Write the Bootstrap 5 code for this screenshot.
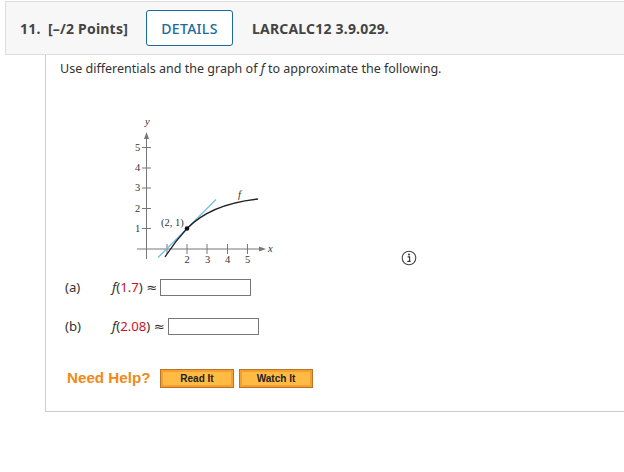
<!DOCTYPE html>
<html lang="en">
<head>
  <meta charset="UTF-8" />
  <title>Question 11</title>
  <meta name="viewport" content="width=device-width, initial-scale=1" />
  <link href="https://cdn.jsdelivr.net/npm/bootstrap@5.3.0/dist/css/bootstrap.min.css" rel="stylesheet" />
  <style>
    body { font-family: "Noto Sans", "DejaVu Sans", sans-serif; font-size: 12.53px; color: #333; background: #fff; overflow: hidden; }
    .q-head { margin: 1px 0 0 5px; height: 54px; background: #f7f7f7; border: 1px solid #ddd; border-right: 0; padding-left: 14px; font-weight: 700; font-size: 14px; letter-spacing: .2px; color: #444; }
    .q-num { width: 28px; }
    .q-points { width: 98px; }
    .q-details { width: 87px; height: 36px; border: 1px solid #1a6a9c; border-radius: 3px; color: #1a6a9c; background: #fff; font-weight: 500; font-size: 14px; letter-spacing: .3px; padding: 0; }
    .q-code { margin-left: 19px; }
    .q-body { margin-left: 45px; height: 357px; border-left: 1px solid #ccc; border-bottom: 1px solid #ccc; padding: 5px 0 0 14px; }
    .q-intro { line-height: 18px; }
    .q-graph { margin: 33px 0 0 60px; width: 170px; height: 160px; }
    .q-info { margin: 171px 0 0 110px; width: 18px; height: 18px; }
    .q-part { height: 17px; line-height: 17px; font-size: 13.2px; }
    .q-letter { width: 52px; padding-left: 5px; color: #333; }
    .q-expr { white-space: nowrap; padding-right: 3px; }
    .q-red { color: #d0112b; }
    .q-fn { font-style: italic; }
    .q-box { width: 91px; height: 17px; border: 1px solid #777; background: #fff; }
    .q-help { margin: 32px 0 0 7px; }
    .q-needhelp { font-family: "Liberation Sans", Arial, sans-serif; font-weight: 700; font-size: 15.2px; color: #ef8a17; width: 93px; }
    .q-orange { width: 74px; height: 19px; padding: 0; border: 1px solid #b8752a; box-shadow: inset 0 0 0 2px #f59f2f; background: #ffbb44; border-radius: 0; font-family: "Liberation Sans", Arial, sans-serif; font-weight: 700; font-size: 10px; color: #222; }
    .q-read { margin-right: 5px; }
    .q-graph text { font-family: "Liberation Serif", serif; font-size: 10.5px; fill: #333; }
  </style>
</head>
<body>

<div class="q-head d-flex align-items-center">
  <span class="q-num">11.</span>
  <span class="q-points">[–/2 Points]</span>
  <button class="q-details btn">DETAILS</button>
  <span class="q-code">LARCALC12 3.9.029.</span>
</div>

<div class="q-body">
  <div class="q-intro">Use differentials and the graph of <i>f</i> to approximate the following.</div>

  <div class="d-flex">
    <svg class="q-graph" viewBox="120 110 170 160">
      <g stroke="#777" stroke-width="1" fill="none">
        <path d="M146.5 136V258M137 248H262" />
        <path d="M142 227.5H151M142 207.5H151M142 187H151M142 167H151M142 146.5H151" />
        <path d="M167 243V253M187 243V253M207 243V253M227.5 243V253M247.5 243V253" />
      </g>
      <path d="M146.5 131l-2.5 7h5zM266 248l-7-2.5v5z" fill="#777" />
      <path d="M158 256.5L216 198.5" stroke="#74bde3" stroke-width="1.3" fill="none" />
      <path d="M165 256C172 245 180 235 187 227.5C205 209 230 201 258 198" stroke="#222" stroke-width="1.3" fill="none" />
      <circle cx="187" cy="227.5" r="2.3" fill="#111" />
      <text x="145" y="124" font-style="italic">y</text>
      <text x="135" y="150">5</text>
      <text x="135" y="170">4</text>
      <text x="135" y="190">3</text>
      <text x="135" y="211">2</text>
      <text x="135" y="231">1</text>
      <text x="161" y="225">(2, 1)</text>
      <text x="238" y="197" font-style="italic">f</text>
      <text x="184.5" y="262">2</text>
      <text x="205" y="262">3</text>
      <text x="225" y="262">4</text>
      <text x="245" y="262">5</text>
      <text x="268" y="251" font-style="italic">x</text>
    </svg>
    <svg class="q-info" viewBox="0 0 18 18">
      <circle cx="9" cy="9" r="6.8" fill="none" stroke="#444" stroke-width="1.1" />
      <circle cx="9" cy="5.6" r="1" fill="#333" />
      <path d="M7.6 7.9H9.6V12.2H10.6M7.4 12.4H10.6" fill="none" stroke="#333" stroke-width="1.1" />
    </svg>
  </div>

  <div class="q-part d-flex align-items-center" style="margin-top: 8px">
    <span class="q-letter">(a)</span>
    <span class="q-expr"><span class="q-fn">f</span>(<span class="q-red">1.7</span>) ≈</span>
    <span class="q-box"></span>
  </div>
  <div class="q-part d-flex align-items-center" style="margin-top: 22px">
    <span class="q-letter">(b)</span>
    <span class="q-expr"><span class="q-fn">f</span>(<span class="q-red">2.08</span>) ≈</span>
    <span class="q-box"></span>
  </div>

  <div class="q-help d-flex align-items-center">
    <span class="q-needhelp">Need Help?</span>
    <button class="q-orange q-read">Read It</button>
    <button class="q-orange">Watch It</button>
  </div>
</div>

<script src="https://cdn.jsdelivr.net/npm/bootstrap@5.3.0/dist/js/bootstrap.bundle.min.js"></script>
</body>
</html>
